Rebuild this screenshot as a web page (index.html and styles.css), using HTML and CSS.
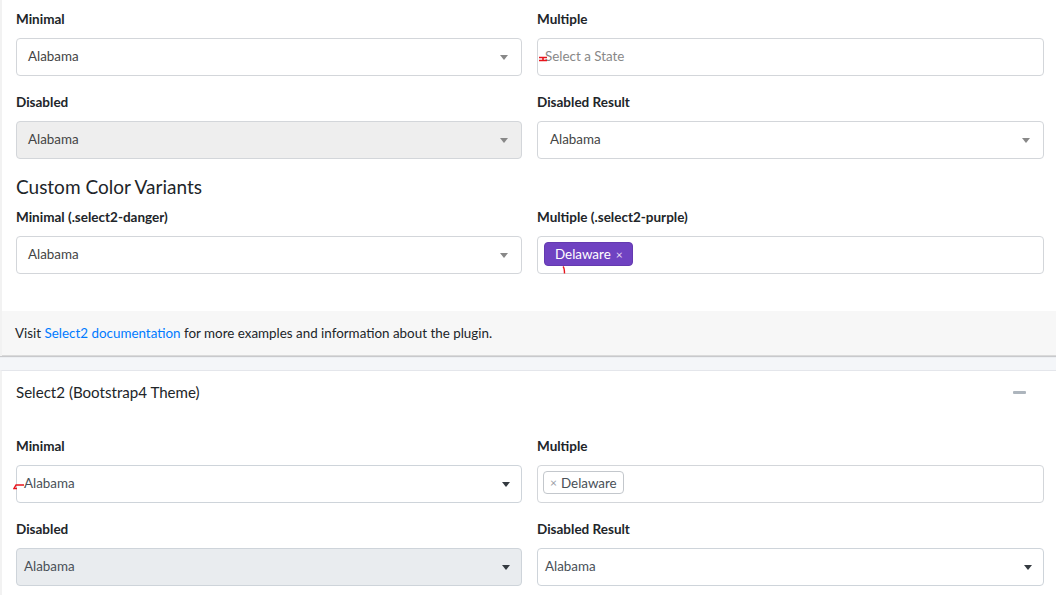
FILE: index.html
```html
<!DOCTYPE html>
<html>
<head>
<meta charset="utf-8">
<link rel="stylesheet" href="styles.css">
</head>
<body>
<div class="page">
  <section class="card card-first">
    <div class="card-body">
      <div class="row">
        <div class="col">
          <div class="group">
            <div class="label">Minimal</div>
            <div class="sel"><span class="val">Alabama</span><span class="arrow"></span></div>
          </div>
          <div class="group">
            <div class="label">Disabled</div>
            <div class="sel sel-disabled"><span class="val">Alabama</span><span class="arrow"></span></div>
          </div>
        </div>
        <div class="col">
          <div class="group">
            <div class="label">Multiple</div>
            <div class="sel sel-multi"><span class="placeholder">Select a State</span>
              <svg class="mark mark-1" width="9" height="7" viewBox="0 0 9 7"><path d="M0 1.5H8M0 4.5H8M4 1.5V4.5" stroke="#e8141c" stroke-width="1.6" fill="none"/></svg>
            </div>
          </div>
          <div class="group">
            <div class="label">Disabled Result</div>
            <div class="sel sel-right"><span class="val">Alabama</span><span class="arrow"></span></div>
          </div>
        </div>
      </div>
      <h3 class="subhead">Custom Color Variants</h3>
      <div class="row">
        <div class="col">
          <div class="group">
            <div class="label">Minimal (.select2-danger)</div>
            <div class="sel"><span class="val">Alabama</span><span class="arrow"></span></div>
          </div>
        </div>
        <div class="col">
          <div class="group">
            <div class="label">Multiple (.select2-purple)</div>
            <div class="sel sel-multi sel-tagged">
              <span class="tag tag-purple">Delaware <span class="tag-x">×</span></span>
              <svg class="mark mark-2" width="5" height="8" viewBox="0 0 5 8"><path d="M1 0.5Q2.5 2 2.5 7.5" stroke="#e8141c" stroke-width="1.4" fill="none"/></svg>
            </div>
          </div>
        </div>
      </div>
    </div>
    <div class="card-footer"><span>Visit <a class="link">Select2 documentation</a> for more examples and information about the plugin.</span></div>
  </section>

  <section class="card card-second">
    <div class="card-header">
      <h3 class="card-title">Select2 (Bootstrap4 Theme)</h3>
      <span class="minus"></span>
    </div>
    <div class="card-body body-2">
      <div class="row">
        <div class="col">
          <div class="group">
            <div class="label">Minimal</div>
            <div class="sel bs"><span class="val">Alabama</span><span class="arrow"></span>
              <svg class="mark mark-3" width="12" height="6" viewBox="0 0 12 6"><path d="M11 1H3L1 4.5H4" stroke="#e8141c" stroke-width="1.4" fill="none"/></svg>
            </div>
          </div>
          <div class="group">
            <div class="label">Disabled</div>
            <div class="sel bs bs-disabled"><span class="val">Alabama</span><span class="arrow"></span></div>
          </div>
        </div>
        <div class="col">
          <div class="group">
            <div class="label">Multiple</div>
            <div class="sel sel-multi bs-multi">
              <span class="tag tag-bs"><span class="tag-x">×</span> Delaware</span>
            </div>
          </div>
          <div class="group">
            <div class="label">Disabled Result</div>
            <div class="sel bs"><span class="val">Alabama</span><span class="arrow"></span></div>
          </div>
        </div>
      </div>
    </div>
  </section>
</div>
</body>
</html>
```

FILE: styles.css
```css
* { box-sizing: border-box; }
html, body { margin: 0; padding: 0; }
body {
  background: #f4f6f9;
  font-family: "Source Sans Pro", Lato, "Liberation Sans", sans-serif;
  color: #212529;
  width: 1056px;
  height: 595px;
  overflow: hidden;
}
.page { display: flex; flex-direction: column; }
.card {
  background: #fff;
  border-left: 2px solid #f2f2f2;
}
.card-first {
  box-shadow: 0 1px 1px rgba(0,0,0,0.18);
  margin-bottom: 14px;
}
.card-second {
  border-top: 1px solid #e4e6eb;
}
.card-body { padding: 9px 12px 37px 14px; }
.row { display: flex; gap: 15px; }
.col { flex: 1 1 0; display: flex; flex-direction: column; gap: 16px; }
.col:first-child { flex-basis: 506px; flex-grow: 0; }
.group { display: flex; flex-direction: column; gap: 9px; }
.label {
  font-weight: 700;
  font-size: 13.5px;
  line-height: 20px;
  height: 20px;
}
.sel {
  position: relative;
  height: 38px;
  border: 1px solid #d3d6da;
  border-radius: 4px;
  display: flex;
  align-items: center;
  padding-left: 11px;
  padding-bottom: 3px;
  font-size: 13.4px;
  color: #444;
  background: #fff;
}
.sel-right { padding-left: 12px; }
.sel-disabled { background: #eee; }
.val { flex: 1; }
.arrow {
  width: 0; height: 0;
  border-left: 4px solid transparent;
  border-right: 4px solid transparent;
  border-top: 5px solid #888;
  margin-right: 13px;
  margin-top: 3px;
}
.placeholder { color: #888; }
.sel-multi { padding-left: 7px; }
.sel-tagged { padding-left: 6px; align-items: flex-start; padding-top: 5px; }
.tag {
  display: inline-flex;
  align-items: center;
  border-radius: 4px;
  font-size: 13.4px;
}
.tag-purple {
  background: #6f42c1;
  border: 1px solid #643ab0;
  color: #fff;
  height: 24px;
  padding: 0 9px 0 10px;
  gap: 5px;
}
.tag-purple .tag-x { color: #e6dcf5; font-size: 12px; }
.subhead {
  margin: 16px 0 8px;
  font-size: 19px;
  font-weight: 400;
  line-height: 24px;
}
.card-footer {
  background: #f7f7f7;
  height: 45px;
  display: flex;
  align-items: center;
  padding-left: 13px;
  font-size: 13.4px;
  color: #212529;
  border-bottom: 1px solid #dadada;
}
.link { color: #007bff; }
.card-header {
  height: 41px;
  display: flex;
  align-items: center;
  justify-content: space-between;
  padding: 0 30px 0 14px;
}
.card-title { margin: 0; font-size: 15.1px; font-weight: 400; }
.minus {
  width: 13px; height: 3px;
  background: #adb5bd;
  border-radius: 1px;
  margin-top: 2px;
}
.body-2 { padding-top: 24px; }
.bs { padding-left: 7px; color: #495057; border-color: #ced4da; }
.bs .arrow { border-top-color: #343a40; margin-right: 11px; }
.bs-disabled { background: #e9ecef; }
.bs-multi { padding-left: 5px; }
.tag-bs {
  height: 23px;
  border: 1px solid #c3c7cc;
  color: #495057;
  padding: 0 6px 0 6px;
  gap: 4px;
}
.tag-bs .tag-x { color: #9aa0a6; font-size: 12px; }
.mark { position: absolute; }
.mark-1 { left: 1px; top: 17px; }
.mark-2 { left: 24px; top: 29px; }
.mark-3 { left: -4px; top: 18px; }
```
